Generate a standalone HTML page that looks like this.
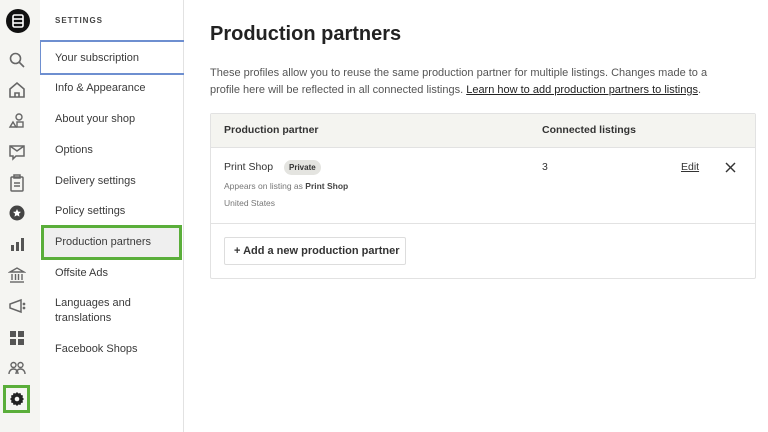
<!DOCTYPE html>
<html><head><meta charset="utf-8"><style>
*{margin:0;padding:0;box-sizing:border-box}
body{width:768px;height:432px;overflow:hidden;background:#fff;font-family:"Liberation Sans",sans-serif;color:#222;position:relative}
.rail{position:absolute;left:0;top:0;width:40px;height:432px;background:#f5f5f2}
.rail svg{position:absolute;left:8px;width:18px;height:18px}
.nav{position:absolute;left:40px;top:0;width:144px;height:432px;border-right:1px solid #e2e2e2;background:#fff}
.nav .h{position:absolute;left:15px;top:16px;font-size:8px;letter-spacing:1px;font-weight:bold;color:#444}
.nav .i{position:absolute;left:15px;font-size:11px;color:#3a3a3a;line-height:15px}
.sub{position:absolute;left:0;top:40px;width:144px;height:35px;border:2px solid #6e8fd0;border-left:1px solid #6e8fd0;border-right:none}
.sel{position:absolute;left:1px;top:225px;width:141px;height:35px;border:3px solid #5aae3a;background:#efefef}
.gear{position:absolute;left:3px;top:385px;width:27px;height:28px;border:3px solid #5aae3a;background:#f5f5f2}
h1{position:absolute;left:210px;top:23px;font-size:20px;font-weight:bold;color:#222}
.desc{position:absolute;left:210px;top:65px;width:520px;font-size:11px;line-height:17px;color:#555}
.desc u{color:#222}
.tbl{position:absolute;left:210px;top:113px;width:546px;height:166px;border:1px solid #e2e2e2;border-radius:2px}
.th{height:34px;background:#f4f4f0;border-bottom:1px solid #e2e2e2;font-size:10.5px;font-weight:bold;position:relative;color:#333}
.th span{position:absolute;top:10px}
.row{height:76px;border-bottom:1px solid #e2e2e2;position:relative;font-size:10.5px}
.btn{position:absolute;left:13px;top:123px;width:182px;height:28px;border:1px solid #ddd;border-radius:2px;font-size:11px;font-weight:bold;padding:7px 0 0 9px;color:#333}
</style></head><body>
<div class="rail">
<svg style="top:9px;left:6px;width:24px;height:24px" viewBox="0 0 24 24"><circle cx="12" cy="12" r="12" fill="#111"/><rect x="7" y="6" width="10" height="12" rx="1.5" fill="none" stroke="#fff" stroke-width="1.6"/><line x1="7" y1="10" x2="17" y2="10" stroke="#fff" stroke-width="1.6"/><line x1="7" y1="14" x2="17" y2="14" stroke="#fff" stroke-width="1.6"/></svg>
<svg style="top:51px" viewBox="0 0 18 18" fill="none" stroke="#666" stroke-width="1.6"><circle cx="7.5" cy="7.5" r="5"/><line x1="11" y1="11" x2="16" y2="16"/></svg>
<svg style="top:81px" viewBox="0 0 18 18" fill="none" stroke="#666" stroke-width="1.6"><path d="M2 8L9 2l7 6v8H2z"/><path d="M7 16v-4h4v4"/></svg>
<svg style="top:112px" viewBox="0 0 18 18" fill="none" stroke="#666" stroke-width="1.4"><circle cx="11" cy="5" r="3"/><path d="M2 15l3-5 3 5z"/><rect x="9" y="10" width="6" height="5"/></svg>
<svg style="top:143px" viewBox="0 0 18 18" fill="none" stroke="#666" stroke-width="1.5"><path d="M2 3h14v10H8l-3 3v-3H2z"/><path d="M2 3l7 5 7-5"/></svg>
<svg style="top:174px" viewBox="0 0 18 18" fill="none" stroke="#666" stroke-width="1.5"><rect x="3" y="3" width="12" height="14" rx="1"/><rect x="6" y="1" width="6" height="3"/><line x1="6" y1="9" x2="12" y2="9"/><line x1="6" y1="12" x2="12" y2="12"/></svg>
<svg style="top:204px" viewBox="0 0 18 18"><circle cx="9" cy="9" r="7.5" fill="#444"/><path d="M9 5l1.2 2.6 2.8.3-2.1 1.9.6 2.8L9 11.2l-2.5 1.4.6-2.8L5 7.9l2.8-.3z" fill="#fff"/></svg>
<svg style="top:235px" viewBox="0 0 18 18" fill="#555"><rect x="3" y="10" width="3" height="6"/><rect x="8" y="7" width="3" height="9"/><rect x="13" y="3" width="3" height="13"/></svg>
<svg style="top:266px" viewBox="0 0 18 18" fill="none" stroke="#666" stroke-width="1.4"><path d="M2 6l7-4 7 4z"/><line x1="4" y1="8" x2="4" y2="14"/><line x1="7.5" y1="8" x2="7.5" y2="14"/><line x1="10.5" y1="8" x2="10.5" y2="14"/><line x1="14" y1="8" x2="14" y2="14"/><line x1="2" y1="16" x2="16" y2="16"/></svg>
<svg style="top:297px" viewBox="0 0 18 18" fill="none" stroke="#666" stroke-width="1.5"><path d="M2 7v4l11 4V3z"/><circle cx="16" cy="7" r=".6"/><circle cx="16" cy="11" r=".6"/></svg>
<svg style="top:329px" viewBox="0 0 18 18" fill="#555"><rect x="2" y="2" width="6" height="6"/><rect x="10" y="2" width="6" height="6"/><rect x="2" y="10" width="6" height="6"/><rect x="10" y="10" width="6" height="6"/></svg>
<svg style="top:359px" viewBox="0 0 18 18" fill="none" stroke="#666" stroke-width="1.4"><circle cx="5.5" cy="6" r="2.5"/><circle cx="12.5" cy="6" r="2.5"/><path d="M1 15c0-3 2-5 4.5-5s4.5 2 4.5 5M8 15c0-3 2-5 4.5-5s4.5 2 4.5 5"/></svg>
<div class="gear"></div>
<svg style="top:390px;left:8px" viewBox="0 0 18 18"><path d="M9 2l1.5 1.5 2-.5.5 2 2 .5-.5 2L16 9l-1.5 1.5.5 2-2 .5-.5 2-2-.5L9 16l-1.5-1.5-2 .5-.5-2-2-.5.5-2L2 9l1.5-1.5-.5-2 2-.5.5-2 2 .5z" fill="#222"/><circle cx="9" cy="9" r="2.3" fill="#f5f5f2"/></svg>
</div>
<div class="nav">
<div class="h">SETTINGS</div>
<div class="sub"></div>
<div class="sel"></div>
<div class="i" style="top:51px">Your subscription</div>
<div class="i" style="top:81px">Info &amp; Appearance</div>
<div class="i" style="top:112px">About your shop</div>
<div class="i" style="top:143px">Options</div>
<div class="i" style="top:174px">Delivery settings</div>
<div class="i" style="top:204px">Policy settings</div>
<div class="i" style="top:235px">Production partners</div>
<div class="i" style="top:266px">Offsite Ads</div>
<div class="i" style="top:296px">Languages and<br>translations</div>
<div class="i" style="top:342px">Facebook Shops</div>
</div>
<h1>Production partners</h1>
<div class="desc">These profiles allow you to reuse the same production partner for multiple listings. Changes made to a profile here will be reflected in all connected listings. <u>Learn how to add production partners to listings</u>.</div>
<div class="tbl">
<div class="th"><span style="left:13px">Production partner</span><span style="left:331px">Connected listings</span></div>
<div class="row">
<span style="position:absolute;left:13px;top:13px;color:#333">Print Shop</span>
<span style="position:absolute;left:73px;top:12px;background:#e4e4e0;border-radius:8px;font-size:8px;font-weight:bold;padding:3px 5px;color:#333">Private</span>
<span style="position:absolute;left:13px;top:33px;font-size:8.5px;color:#777">Appears on listing as <b style="color:#444">Print Shop</b></span>
<span style="position:absolute;left:13px;top:50px;font-size:8.5px;color:#777">United States</span>
<span style="position:absolute;left:331px;top:13px;color:#333">3</span>
<span style="position:absolute;left:470px;top:13px;text-decoration:underline;color:#333">Edit</span>
<svg style="position:absolute;left:514px;top:14px" width="11" height="11" viewBox="0 0 11 11" stroke="#333" stroke-width="1.4"><line x1="1" y1="1" x2="10" y2="10"/><line x1="10" y1="1" x2="1" y2="10"/></svg>
</div>
<div class="btn">+ Add a new production partner</div>
</div>
</body></html>
